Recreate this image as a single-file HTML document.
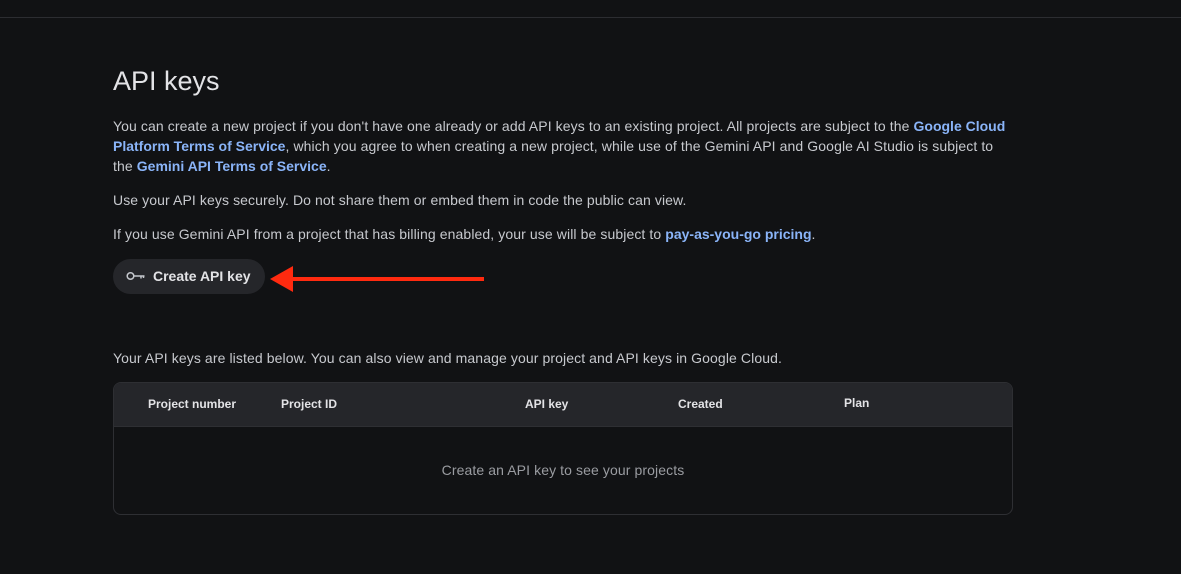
<!DOCTYPE html>
<html><head><style>
body{margin:0;width:1181px;height:574px;background:#111214;font-family:"Liberation Sans",sans-serif;color:#c4c7cc;position:relative;overflow:hidden}
.topline{position:absolute;top:17px;left:0;right:0;height:1px;background:#2c2d31}
h1{position:absolute;left:113px;top:66px;margin:0;font-weight:400;font-size:27px;color:#e3e3e6}
.p{position:absolute;left:113px;font-size:14px;line-height:20px;width:900px;color:#c7c9ce;letter-spacing:0.1px}
a{color:#8ab4f8;font-weight:bold;text-decoration:none;letter-spacing:0}
.btn{position:absolute;left:113px;top:259px;width:152px;height:35px;border-radius:18px;background:#25262a;color:#e3e3e6;font-size:14px;font-weight:bold;line-height:35px}
.btn span{position:absolute;left:40px}
.tbl{position:absolute;left:113px;top:382px;width:898px;height:131px;border:1px solid #2e2f33;border-radius:8px;overflow:hidden}
.th{height:43px;background:#25262a;border-bottom:1px solid #2e2f33;position:relative;font-size:12px;font-weight:bold;color:#e3e3e6}
.th div{position:absolute;top:14px}
.empty{position:absolute;top:79px;width:100%;text-align:center;font-size:14px;color:#9a9ca1;letter-spacing:0.1px}
</style></head><body>
<div class="topline"></div>
<h1>API keys</h1>
<div class="p" style="top:116px">You can create a new project if you don't have one already or add API keys to an existing project. All projects are subject to the <a>Google Cloud Platform Terms of Service</a>, which you agree to when creating a new project, while use of the Gemini API and Google AI Studio is subject to the <a>Gemini API Terms of Service</a>.</div>
<div class="p" style="top:190px">Use your API keys securely. Do not share them or embed them in code the public can view.</div>
<div class="p" style="top:224px">If you use Gemini API from a project that has billing enabled, your use will be subject to <a>pay-as-you-go pricing</a>.</div>
<div class="btn"><svg style="position:absolute;left:13px;top:11px" width="20" height="12" viewBox="0 0 20 12"><circle cx="4.5" cy="6" r="3.3" fill="none" stroke="#c4c7cc" stroke-width="1.5"/><path d="M8 6H18.5M15 6V8.5M17.5 6V8" stroke="#c4c7cc" stroke-width="1.5" fill="none"/></svg><span>Create API key</span></div>
<svg style="position:absolute;left:269px;top:265px" width="216" height="28"><polygon points="1,14 24,1 24,27" fill="#ff2a0f"/><rect x="22" y="12" width="193" height="4" fill="#ff2a0f"/></svg>
<div class="p" style="top:348px">Your API keys are listed below. You can also view and manage your project and API keys in Google Cloud.</div>
<div class="tbl"><div class="th"><div style="left:34px">Project number</div><div style="left:167px">Project ID</div><div style="left:411px">API key</div><div style="left:564px">Created</div><div style="left:730px;top:13px">Plan</div></div>
<div class="empty">Create an API key to see your projects</div></div>
</body></html>
